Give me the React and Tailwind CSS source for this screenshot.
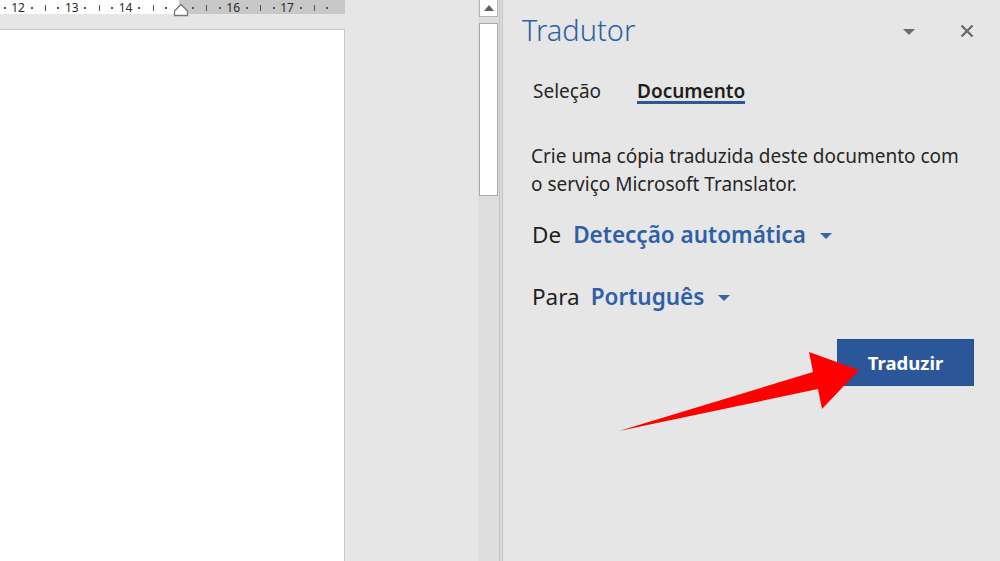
const font = { fontFamily: '"Noto Sans", "Open Sans", sans-serif' };

function Ruler() {
  const marks = [];
  for (let n = 11; n <= 17; n++) {
    const c = 18 + (n - 12) * 53.8;
    if (n !== 15 && n >= 12) marks.push({ x: c, kind: 'num', label: String(n) });
    marks.push({ x: c + 13.5, kind: 'dot' });
    marks.push({ x: c + 27, kind: 'tick' });
    marks.push({ x: c + 40.3, kind: 'dot' });
  }
  return (
    <div className="relative h-[15px] w-[345px]">
      <div className="absolute left-0 top-0 h-[14px] w-[179px] bg-white" />
      <div className="absolute left-[179px] top-0 h-[14px] w-[166px] bg-[#c8c8c8]" />
      {marks
        .filter((m) => m.x > -5 && m.x < 340)
        .map((m, i) =>
          m.kind === 'num' ? (
            <span
              key={i}
              className="absolute top-[2px] -translate-x-1/2 text-[12px] leading-[12px] text-[#2a2a2a]"
              style={{ left: m.x, ...font }}
            >
              {m.label}
            </span>
          ) : m.kind === 'dot' ? (
            <span
              key={i}
              className="absolute top-[7px] h-[2px] w-[2px] bg-[#555]"
              style={{ left: m.x - 1 }}
            />
          ) : (
            <span
              key={i}
              className="absolute top-[5px] h-[6px] w-[1px] bg-[#555]"
              style={{ left: m.x }}
            />
          )
        )}
      <svg className="absolute left-[173px] top-[3px]" width="16" height="14" viewBox="0 0 16 14">
        <path d="M1.5 12.5 L1.5 8 L8 1.5 L14.5 8 L14.5 12.5 Z" fill="#fff" stroke="#777" strokeWidth="1.3" />
      </svg>
    </div>
  );
}

function Caret({ className }) {
  return (
    <svg className={className} width="12" height="7" viewBox="0 0 12 7">
      <path d="M0 0 L12 0 L6 6 Z" fill="currentColor" />
    </svg>
  );
}

export default function App() {
  return (
    <div className="flex h-[561px] w-[1000px] overflow-hidden bg-[#e6e6e6]" style={font}>
      {/* document area */}
      <div className="flex w-[478px] flex-col">
        <Ruler />
        <div className="mt-[14px] w-[345px] flex-1 border-t border-r border-[#c9c9c9] bg-white" />
      </div>

      {/* scrollbar */}
      <div className="flex w-[21px] flex-col items-center bg-[#dedede]">
        <div className="flex h-[17px] w-[19px] items-center justify-center border border-t-0 border-[#b4b4b4] bg-white">
          <svg width="10" height="6" viewBox="0 0 10 6">
            <path d="M0 6 L10 6 L5 0 Z" fill="#606060" />
          </svg>
        </div>
        <div className="mt-[6px] h-[173px] w-[19px] border border-[#a8a8a8] bg-white" />
      </div>

      {/* splitter */}
      <div className="w-[4px] border-l border-r border-[#c4c4c4] bg-[#dadada]" />

      {/* translator pane */}
      <div className="flex flex-1 flex-col pl-[19px] pr-[26px] text-[#262626]">
        <div className="mt-[11px] flex items-start justify-between">
          <span className="text-[29px] font-light leading-[38px] text-[#2f5fa3]">Tradutor</span>
          <div className="mt-[13px] flex items-center gap-[45px] text-[#6b6b6b]">
            <Caret className="mt-[2px]" />
            <svg width="14" height="14" viewBox="0 0 14 14">
              <path d="M1.5 1.5 L12.5 12.5 M12.5 1.5 L1.5 12.5" stroke="currentColor" strokeWidth="2.4" />
            </svg>
          </div>
        </div>

        <div className="ml-[11px] mt-[32px] flex items-start gap-[36px] text-[19px] leading-[20px]">
          <span>Seleção</span>
          <span className="border-b-[3px] border-[#2b579a] font-semibold text-[#1e1e1e]">Documento</span>
        </div>

        <p className="ml-[9px] mt-[38px] text-[19px] leading-[28px] text-[#262626]">
          Crie uma cópia traduzida deste documento com
          <br />o serviço Microsoft Translator.
        </p>

        <div className="ml-[10px] mt-[22px] flex items-center text-[22.5px] leading-[30px]">
          <span className="text-[#1e1e1e]">De</span>
          <span className="ml-[12px] font-semibold text-[#2f5fa6]">Detecção automática</span>
          <Caret className="ml-[14px] mt-[2px] text-[#3a64a8]" />
        </div>

        <div className="ml-[10px] mt-[32px] flex items-center text-[22.5px] leading-[30px]">
          <span className="text-[#1e1e1e]">Para</span>
          <span className="ml-[11px] font-semibold text-[#2f5fa6]">Português</span>
          <Caret className="ml-[14px] mt-[2px] text-[#3a64a8]" />
        </div>

        <div className="mt-[27px] flex justify-end">
          <button className="h-[47px] w-[137px] border border-[#24508f] bg-[#2b579a] text-[18.5px] font-bold text-white">
            Traduzir
          </button>
        </div>
      </div>

      {/* red arrow annotation */}
      <svg className="pointer-events-none absolute left-0 top-0" width="1000" height="561">
        <polygon points="619,431 813,372 809,352 859,370 822,409 818,389" fill="#ff0000" />
      </svg>
    </div>
  );
}
